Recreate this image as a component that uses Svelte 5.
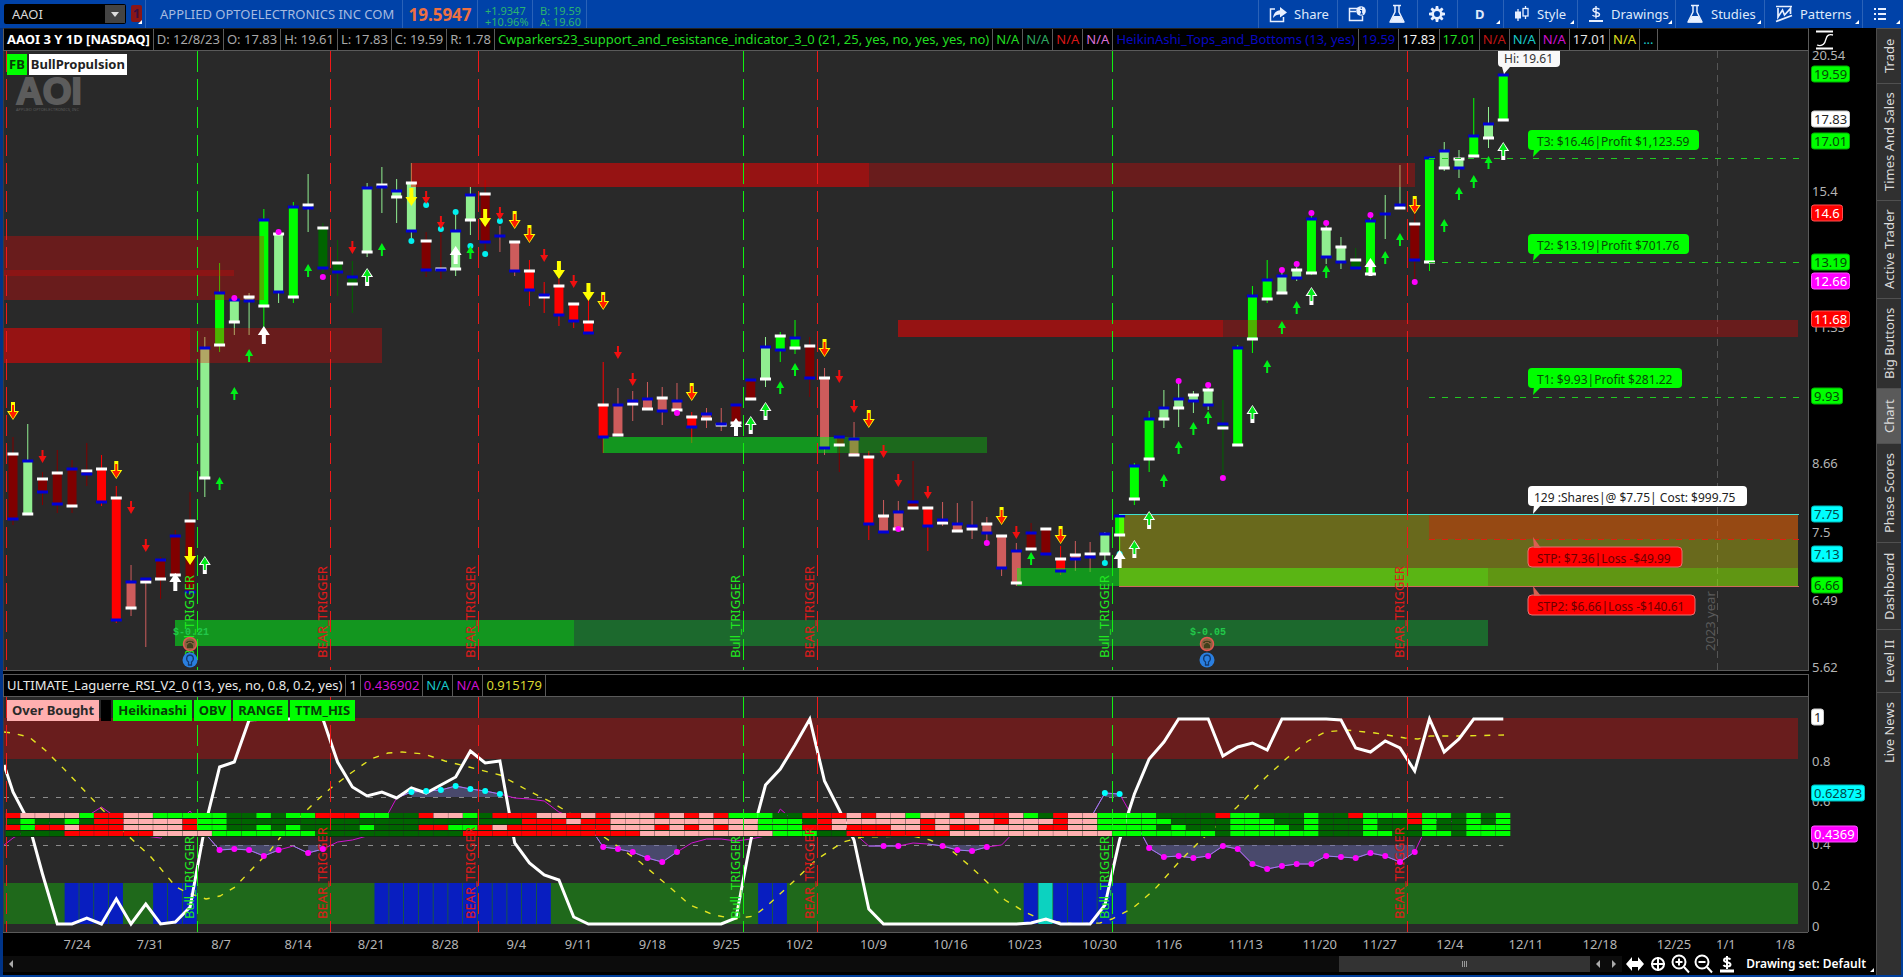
<script>
  // Design-space geometry of the two plots; drawings are rescaled to the live size.
  const X0 = 4, PLOT_W = 1804;
  const P1 = { y: 51, h: 619 };
  const P2 = { y: 697, h: 235 };
  const FIRST = 13, STEP = 14.755;

  let w = $state(PLOT_W), h1 = $state(P1.h), h2 = $state(P2.h);

  const sx = (v) => ((v - X0) * w) / PLOT_W;
  const cx = (i) => sx(FIRST + STEP * i);
  const y1 = (v) => ((v - P1.y) * h1) / P1.h;
  const y2 = (v) => ((v - P2.y) * h2) / P2.h;

  const COL = { G: '#00ff00', L: '#90ee90', D: '#006400', R: '#ff0000', P: '#cd5c5c', M: '#800000' };
  const CELL = { G: '#00ff00', D: '#006400', R: '#ff0000', P: '#ffafaf' };

  // colour, high, low, open tick (white), close tick (blue)
  const candles = [
    ['M',437,525,454,519],['L',424,514,514,461],['M',472,505,479,492],['M',450,513,473,504],['M',460,513,506,469],
    ['M',443,486,471,474],['R',455,506,469,502],['R',486,623,498,620],['P',565,616,608,582],['P',578,647,582,579],
    ['M',557,599,579,560],['M',530,577,575,536],['M',492,593,521,592],['L',337,497,478,348],['G',263,352,345,293],
    ['L',297,335,322,300],['L',293,335,297,301],['G',209,330,306,220],['L',231,303,234,292],['G',202,303,297,207],
    ['L',174,232,205,208],['D',223,273,228,268],['D',240,296,263,272],['D',261,313,284,277],['L',183,257,252,188],
    ['L',167,213,185,187],['L',179,223,197,191],['L',163,238,183,231],['M',232,277,241,270],['M',233,279,269,270],
    ['L',214,276,269,231],['L',187,235,220,195],['M',180,250,194,242],['P',226,252,236,236],['P',242,276,242,271],
    ['R',260,306,271,290],['R',282,313,297,295],['R',279,326,286,315],['R',304,328,304,321],['R',300,333,322,333],
    ['R',362,453,405,437],['P',388,435,435,405],['P',391,421,404,401],['P',382,409,409,399],['P',387,425,398,411],
    ['P',383,410,410,401],['R',412,443,417,427],['P',408,428,419,414],['P',408,431,425,424],['M',405,423,423,405],
    ['M',380,399,399,380],['L',337,387,379,347],['G',332,362,336,350],['G',320,354,348,338],['M',337,397,346,378],
    ['P',368,455,378,448],['M',436,472,445,437],['P',422,455,455,439],['R',451,540,457,524],['P',500,533,516,532],
    ['P',501,529,529,512],['M',461,508,508,502],['R',508,551,508,526],['P',502,526,523,520],['P',503,531,531,524],
    ['P',501,539,529,526],['P',517,542,524,533],['P',536,576,536,568],['P',543,586,583,551],['M',523,549,549,533],
    ['M',529,554,529,554],['R',546,575,559,571],['P',541,571,555,559],['P',542,572,554,557],['L',532,562,554,534],
    ['G',516,553,535,516],['G',463,505,499,466],['G',411,472,459,419],['L',390,428,419,408],['L',383,427,408,399],
    ['L',391,413,395,401],['L',387,410,390,405],['D',400,475,428,424],['G',345,445,445,348],['G',286,353,339,296],
    ['G',260,303,299,280],['L',272,293,293,276],['L',267,281,270,278],['G',215,275,273,219],['L',225,264,229,257],
    ['L',237,269,247,262],['D',248,268,260,268],['G',217,274,274,221],['L',195,239,214,214],['L',165,208,208,205],
    ['M',213,280,224,260],['G',158,271,262,158],['L',142,171,168,151],['L',150,178,159,168],['G',98,156,156,136],
    ['L',107,148,138,124],['G',74,120,120,75]
  ];

  const arrows = [
    ['yr',0,411],['r',2,456],['yr',7,470],['r',8,507],['r',9,545],['w',11,582],['y',12,556],['wg',13,565],['g',14,484],
    ['g',15,394],['g',16,356],['w',17,335],['g',20,271],['r',23,247],['wg',24,277],['g',25,250],['y',27,197],['r',28,197],
    ['r',29,222],['w',30,255],['g',31,253],['y',32,218],['r',33,213],['yr',34,220],['yr',35,234],['r',36,255],['y',37,270],
    ['r',38,281],['y',39,292],['yr',40,301],['r',41,352],['r',42,379],['yr',46,392],['w',49,427],['wg',50,425],['wg',51,411],
    ['g',52,388],['g',53,370],['yr',55,348],['r',56,376],['r',57,406],['yr',58,419],['r',59,451],['r',60,480],['r',62,492],
    ['yr',67,516],['r',68,532],['g',69,559],['yr',71,535],['w',75,559],['wg',76,549],['wg',77,520],['g',78,481],['g',79,448],
    ['g',80,429],['g',81,418],['wg',84,414],['g',85,367],['g',86,328],['g',87,308],['wg',88,296],['g',89,272],['w',92,267],
    ['g',93,258],['g',94,240],['yr',95,205],['g',97,226],['g',98,194],['g',99,182],['g',100,163],['wg',101,151]
  ];

  const magentaDots = [[15,298],[18,232],[21,277],[45,413],[60,529],[66,543],[79,381],[81,385],[82,478],[86,270],[87,264],[88,213],[89,223],[92,215],[95,282]];
  const cyanDots = [[27,241],[28,205],[29,229],[30,212],[31,246],[32,254],[33,221],[74,563],[75,554]];

  // x from, x to, y top, y bottom, fill, opacity
  const zones = [
    [4,264,236,300,'#f00',0.3],[4,234,270,276,'#f00',0.23],
    [4,382,328,363,'#f00',0.3],[4,190,328,363,'#f00',0.3],
    [411,1415,163,187,'#f00',0.3],[411,869,163,187,'#f00',0.3],
    [898,1798,320,337,'#f00',0.3],[898,1223,320,337,'#f00',0.3],
    [603,987,437,453,'#0f0',0.3],[603,837,437,453,'#00ff28',0.3],
    [175,1488,620,646,'#00ff38',0.3],[175,574,620,646,'#0f0',0.3],
    [1017,1798,568,586,'#0f0',0.3],[1017,1488,568,586,'#00ff20',0.3],
    [1119,1798,515,586,'#ff0',0.3],[1429,1798,515,539,'#f00',0.3]
  ];

  const triggers = [
    [6,'bear',''],[197,'bull','Bull_TRIGGER'],[330,'bear','BEAR_TRIGGER'],[478,'bear','BEAR_TRIGGER'],[743,'bull','Bull_TRIGGER'],
    [817,'bear','BEAR_TRIGGER'],[1112,'bull','Bull_TRIGGER'],[1407,'bear','BEAR_TRIGGER']
  ];

  const bubbles = [
    [130,171,27,'T3: $16.46|Profit $1,123.59','up'],
    [234,161,27,'T2: $13.19|Profit $701.76','up'],
    [368,154,27,'T1: $9.93|Profit $281.22','up'],
    [486,219,28,'129 :Shares|@ $7.75| Cost: $999.75','cost'],
    [547,154,-10,'STP: $7.36|Loss -$49.99','stop'],
    [595,167,-9,'STP2: $6.66|Loss -$140.61','stop']
  ];

  const axis1 = [
    ['20.54',55,''],['19.59',74,'g'],['17.83',119,'w'],['17.01',141,'g'],['15.4',191,''],['14.6',213,'r'],['13.19',262,'g'],
    ['12.66',281,'m'],['11.33',327,''],['11.68',319,'r'],['9.93',396,'g'],['8.66',463,''],['7.5',532,''],['7.75',514,'c'],
    ['7.13',554,'c'],['6.49',600,''],['6.66',585,'g'],['5.62',667,'']
  ];
  const axis2 = [
    ['1',717,'w'],['0.8',761,''],['0.6',801,''],['0.62873',793,'c'],['0.4',844,''],['0.4369',834,'m'],['0.2',885,''],['0',926,'']
  ];

  const dates = [
    ['7/24',78],['7/31',151],['8/7',222],['8/14',299],['8/21',372],['8/28',446],['9/4',517],['9/11',579],['9/18',653],['9/25',727],
    ['10/2',800],['10/9',874],['10/16',951],['10/23',1025],['10/30',1100],['11/6',1169],['11/13',1246],['11/20',1320],
    ['11/27',1380],['12/4',1450],['12/11',1526],['12/18',1600],['12/25',1674],['1/1',1726],['1/8',1785]
  ];

  const header1 = [
    ['D: 12/8/23','#a8a8a8'],['O: 17.83','#a8a8a8'],['H: 19.61','#a8a8a8'],['L: 17.83','#a8a8a8'],['C: 19.59','#a8a8a8'],['R: 1.78','#a8a8a8'],
    ['Cwparkers23_support_and_resistance_indicator_3_0 (21, 25, yes, no, yes, yes, no)','#22dd22'],
    ['N/A','#22dd22'],['N/A','#2fa860'],['N/A','#d81818'],['N/A','#da70d6'],['HeikinAshi_Tops_and_Bottoms (13, yes)','#0808c0'],['19.59','#0808c0'],
    ['17.83','#f4f4f4'],['17.01','#22dd22'],['N/A','#c01515'],['N/A','#19c8c8'],['N/A','#d010d0'],['17.01','#e4e4e4'],['N/A','#e0e020'],['...','#19c8c8']
  ];
  const header2 = [
    ['ULTIMATE_Laguerre_RSI_V2_0 (13, yes, no, 0.8, 0.2, yes)','#e8e8e8'],['1','#e8e8e8'],['0.436902','#d010d0'],['N/A','#19c8c8'],['N/A','#d010d0'],['0.915179','#d8d830']
  ];

  const rsi = [
    [-0.6,765],[0,792],[1,820],[2,874],[3,924],[4,924],[5,918],[6,924],[7,899],[8,924],[9,904],[10,924],[11,922],[12,907],[13,827],
    [14,767],[15,762],[16,720],[17,719],[21,719],[22,762],[23,787],[24,796],[25,792],[26,798],[27,788],[28,793],[29,785],[30,777],
    [31,751],[32,763],[33,761],[34,843],[35,863],[36,875],[37,880],[38,917],[39,924],[48,924],[49,918],[50,840],[51,785],[52,769],
    [53,745],[54,719],[55,781],[56,810],[57,840],[58,909],[59,924],[68,924],[69,923],[70,919],[71,924],[73,924],[74,905],[75,840],
    [76,794],[77,759],[78,742],[79,719],[81,719],[82,756],[83,747],[84,743],[85,750],[86,719],[89,719],[90,720],[91,748],[92,752],
    [93,741],[94,748],[95,771],[96,719],[97,752],[98,739],[99,719],[101,719]
  ];
  const entropy = [
    [-0.6,845],[0,838],[2,822],[4,826],[6,807],[8,828],[9,836],[10,838],[12,811],[13,833],[14,850],[15,849],[16,850],[17,856],[18,850],
    [19,846],[20,853],[21,849],[22,842],[23,840],[24,836],[25,825],[26,798],[27,792],[28,791],[29,790],[30,786],[31,789],[32,791],
    [33,794],[34,798],[35,799],[36,801],[37,812],[38,818],[39,825],[40,847],[41,849],[42,852],[43,858],[44,862],[45,852],[46,843],
    [47,839],[48,839],[49,841],[50,839],[51,836],[52,809],[53,822],[55,824],[56,818],[57,833],[58,846],[59,846],[60,846],[61,843],
    [62,844],[63,846],[64,850],[65,851],[66,847],[67,845],[68,830],[70,818],[72,824],[73,819],[74,793],[75,794],[76,820],[77,848],
    [78,857],[79,856],[80,858],[81,856],[82,846],[83,849],[84,864],[85,869],[86,866],[87,864],[88,864],[89,856],[90,857],[91,858],
    [92,853],[93,856],[94,862],[95,852],[96,820],[98,822],[101,822]
  ];
  const inRange = (i, list) => list.some(([a, b]) => i >= a && i <= b);
  const low = [[14,18],[20,21],[40,45],[59,60],[63,66],[77,95]];
  const high = [[27,33],[74,75]];
  const lowDots = entropy.filter(([i]) => inRange(i, low));
  const highDots = entropy.filter(([i]) => inRange(i, high));

  const average = [
    [4,732],[12,733],[29,737],[45,750],[65,770],[96,803],[122,830],[151,857],[176,887],[188,893],[206,899],[220,896],[235,887],[253,868],
    [269,852],[282,835],[314,803],[331,788],[351,773],[371,759],[388,753],[402,752],[424,754],[445,761],[469,767],[500,775],[527,790],
    [551,802],[571,814],[589,825],[604,837],[620,848],[640,862],[673,890],[690,905],[714,915],[735,919],[754,916],[768,905],[793,882],
    [816,860],[843,842],[862,837],[913,836],[930,840],[951,850],[971,867],[988,883],[1005,900],[1025,912],[1042,920],[1075,924],
    [1100,923],[1112,919],[1133,908],[1154,890],[1179,862],[1199,842],[1212,830],[1237,807],[1244,800],[1265,778],[1287,758],
    [1308,741],[1325,732],[1346,730],[1375,733],[1405,738],[1418,739],[1430,736],[1460,736],[1504,735]
  ];

  const heat = [
    'RPPPPGRRPPGGGGGDDGDGGRRRGGDDRPPGDRRRPPRPRPPPRPRPRGGGDDRRRPRPPGPPRPRRPGDRPPGGGGDDDDRGGDDDGDDRGGGRGGDGDG',
    'DGDDGDRRPPPPRGGDDDDDDDDDDDDDDDDDDDDRRRPRRPPPPPPPPPPGGGDRPPPPPPRPPPPRPPPRPPGGGGGDDDDGGGDDGDDDGDDRGDDGDG',
    'RGRRPRRRPPPPRGGDDGDGDDDDGDDDRRGGRPRRRRRRRPPPRPRPRPPGGGRRPRRRPPRPRRPPPPRRPPGGGGDGDDDGGGGDGDDDGDDDGDDGGG',
    'DDDDRRRRRRPPPPGGGGGGGDDDDDDDDDDRRRRRRRRRRRRPPPPPPPPPGGGDDRRRRRRRPPPPPPPPPPPGGGGGGGDGGGGGGDDDGGDDGGDGGG'
  ];
  const blueBars = [[4,7],[10,12],[25,36],[51,52],[69,75]].flatMap(([a, b]) => Array.from({ length: b - a + 1 }, (_, k) => a + k));

  const line = (pts, fx) => pts.map(([a, b]) => `${fx(a).toFixed(1)},${y2(b).toFixed(1)}`).join(' ');
  const fillBand = ([a, b], base) => {
    const pts = entropy.filter(([i]) => i >= a && i <= b);
    return `${cx(a)},${y2(base)} ${line(pts, cx)} ${cx(b)},${y2(base)}`;
  };

  const UP = 'M0-7L4 0H1V6H-1V0H-4Z';
  const DOWN = 'M0 7L4 0H1V-6H-1V0H-4Z';
  const UP_BIG = 'M0-9L6 0H2V9H-2V0H-6Z';
  const DOWN_BIG = 'M0 9L6 0H2V-9H-2V0H-6Z';

  const tabs = [
    ['Trade',55],['Times And Sales',117],['Active Trader',98],['Big Buttons',90],['Chart',55],['Phase Scores',99],['Dashboard',87],['Level II',63],['Live News',81]
  ];
</script>

{#snippet flask()}
  <svg class="ico" width="18" height="20" viewBox="0 0 18 20" aria-hidden="true">
    <path d="M5 1.500H13M7 2V8L2 18H16L11 8V2" fill="none" stroke="#e8f0ff" stroke-width="1.500" stroke-linejoin="round" />
    <path d="M5.500 12H12.500L16 18.500H2Z" fill="#e8f0ff" />
  </svg>
{/snippet}

{#snippet vlines(fy, top, bottom, labelY)}
  {#each triggers as [x, kind, label]}
    <line class={kind} x1={sx(x) + 0.5} x2={sx(x) + 0.5} y1={fy(top)} y2={fy(bottom)} stroke-dasharray="21 7" />
    {#if label}
      <text class="trig {kind}-t" transform="translate({sx(x) - 3} {fy(labelY)}) rotate(-90)">{label}</text>
    {/if}
  {/each}
{/snippet}

<div class="app">
  <header class="topbar">
    <div class="symbol">
      <input aria-label="Symbol" value="AAOI" />
      <button class="drop" aria-label="Symbol list"><i></i></button>
    </div>
    <button class="link" aria-label="Link group 1"><b>1</b><i class="corner"></i></button>
    <span class="company">APPLIED OPTOELECTRONICS INC COM</span>
    <strong class="last">19.5947</strong>
    <span class="pair change"><span>+1.9347</span><span>+10.96%</span></span>
    <span class="pair quote"><span>B: 19.59</span><span>A: 19.60</span></span>
    <nav class="tools">
      <button class="t-share">
        <svg class="ico" width="18" height="18" viewBox="0 0 18 18" aria-hidden="true">
          <path d="M6 4H1.500V16.500H14.500V12" fill="none" stroke="#e8f0ff" stroke-width="1.500" />
          <path d="M11 2L18 7.500L11 12.500V9.500C8 9.500 6 10.500 4 13C4.500 8.500 7 5.500 11 5.200Z" fill="#e8f0ff" />
        </svg>Share</button>
      <button class="t-icon" aria-label="Info">
        <svg class="ico" width="18" height="18" viewBox="0 0 18 18" aria-hidden="true">
          <path d="M10 3.500H1.500V15.500H14.500V11M1.500 6.500H8" fill="none" stroke="#e8f0ff" stroke-width="1.500" />
          <circle cx="13" cy="6" r="4.800" fill="#e8f0ff" />
          <path d="M12 5.500H13.500V9M12 9H15M12.700 3.200H14" fill="none" stroke="#0042a8" stroke-width="1.200" />
        </svg></button>
      <button class="t-icon" aria-label="Edit studies">{@render flask()}</button>
      <button class="t-icon" aria-label="Settings">
        <svg class="ico" width="18" height="18" viewBox="-9 -9 18 18" aria-hidden="true">
          <circle r="4.200" fill="none" stroke="#e8f0ff" stroke-width="2.400" />
          {#each [0, 45, 90, 135, 180, 225, 270, 315] as a}
            <path d="M-1.200-8H1.200L1.700-4.800H-1.700Z" fill="#e8f0ff" transform="rotate({a})" />
          {/each}
        </svg></button>
      <button class="t-d"><b>D</b><i class="corner"></i></button>
      <button class="t-style">
        <svg class="ico" width="16" height="18" viewBox="0 0 16 18" aria-hidden="true">
          <path d="M4 4V16M11.500 1V14" stroke="#e8f0ff" stroke-width="1.300" />
          <rect x="1" y="6.500" width="6" height="7" fill="#e8f0ff" />
          <rect x="9" y="3.500" width="5" height="7.500" fill="#0042a8" stroke="#e8f0ff" stroke-width="1.300" />
        </svg>Style<i class="corner"></i></button>
      <button class="t-draw">
        <svg class="ico" width="16" height="18" viewBox="0 0 16 18" aria-hidden="true">
          <path d="M11.500 4.500C10.500 3 5 2.500 5 5.200C5 7.800 11.500 6.600 11.500 9.400C11.500 12 5.500 11.800 4.500 10M8 1V13.500" fill="none" stroke="#e8f0ff" stroke-width="1.400" />
          <rect x="1" y="15" width="14" height="2" fill="#e8f0ff" />
        </svg>Drawings<i class="corner"></i></button>
      <button class="t-stud">{@render flask()}Studies<i class="corner"></i></button>
      <button class="t-pat">
        <svg class="ico" width="18" height="18" viewBox="0 0 18 18" aria-hidden="true">
          <path d="M1 1.500H17M1 16.500L17 10.500M3 3V12L7.500 5L9.500 10L15.500 3.500V9" fill="none" stroke="#e8f0ff" stroke-width="1.700" />
        </svg>Patterns<i class="corner"></i></button>
      <button class="t-list" aria-label="Menu">
        <svg class="ico" width="14" height="14" viewBox="0 0 14 14" aria-hidden="true">
          <path d="M1 2H3M5 2H13M1 7H3M5 7H13M1 12H3M5 12H13" stroke="#e8f0ff" stroke-width="1.800" />
        </svg><i class="corner"></i></button>
    </nav>
  </header>

  <div class="body">
    <main class="charts">
      <div class="strip">
        <span class="title">AAOI 3 Y 1D [NASDAQ]</span>
        {#each header1 as [t, c]}<span style:color={c}>{t}</span>{/each}
      </div>
      <div class="axis-top">
        <svg width="18" height="20" viewBox="0 0 18 20" aria-hidden="true">
          <path d="M0 1.500H17M0 18.500H17" stroke="#fff" stroke-width="2" />
          <path d="M1 15C7 17 9 13 10 9C11 5 13 4 17 5" fill="none" stroke="#fff" stroke-width="1.300" />
        </svg>
      </div>

      <div class="plot" bind:clientWidth={w} bind:clientHeight={h1}>
        <svg class="canvas" width="100%" height="100%" role="img" aria-label="Price chart">
          <g fill="#5c5c5c">
            <text x="12" y="53" class="logo">AOI</text>
            <text x="12" y="60" class="logo-sub">APPLIED OPTOELECTRONICS, INC</text>
          </g>
          <line x1={sx(1717) + 0.5} x2={sx(1717) + 0.5} y1="0" y2={h1} stroke="#555" stroke-dasharray="7 5" />
          <text class="year" transform="translate({sx(1715)} {y1(651)}) rotate(-90)">2023 year</text>

          {#each candles as [c, hi, lo, a, b], i}
            <rect x={cx(i) - 0.5} y={y1(hi)} width="1" height={y1(lo) - y1(hi)} fill={COL[c]} />
            <rect x={cx(i) - 4.5} y={y1(Math.min(a, b))} width="9" height={Math.abs(y1(a) - y1(b))} fill={COL[c]} />
          {/each}
          {#each zones as [xa, xb, ya, yb, f, o]}
            <rect x={sx(xa)} y={y1(ya)} width={sx(xb) - sx(xa)} height={y1(yb) - y1(ya)} fill={f} fill-opacity={o} />
          {/each}
          {#each candles as [c, hi, lo, a, b], i}
            {#if a !== b}<rect x={cx(i) - 5.5} y={y1(a) - 1.5} width="11" height="3" fill="#fff" />{/if}
            <rect x={cx(i) - 5.5} y={y1(b) - 1.5} width="11" height="3" fill="#0000d8" />
          {/each}

          <line x1={sx(1119)} x2={sx(1799)} y1={y1(514.5)} y2={y1(514.5)} stroke="#40e0d0" />
          <line x1={sx(1119)} x2={sx(1799)} y1={y1(586.5)} y2={y1(586.5)} stroke="#cd6c5c" />
          {#each [[158.5, '#22c822'], [262.5, '#22c822'], [397.5, '#22c822'], [539.5, '#e02010']] as [y, c]}
            <line x1={sx(1429)} x2={sx(1799)} y1={y1(y)} y2={y1(y)} stroke={c} stroke-dasharray="6 7" />
          {/each}

          {@render vlines(y1, 51, 670, 658)}

          {#each magentaDots as [i, y]}<circle cx={cx(i)} cy={y1(y)} r="3" fill="#ff00ff" />{/each}
          {#each cyanDots as [i, y]}<circle cx={cx(i)} cy={y1(y)} r="3" fill="#00f0f0" />{/each}
          {#each arrows as [k, i, y]}
            <g transform="translate({cx(i)} {y1(y)})">
              {#if k === 'g'}<path d={UP} fill="#00f018" />
              {:else if k === 'r'}<path d={DOWN} fill="#f01010" />
              {:else if k === 'w' || k === 'wg'}
                <path d={UP_BIG} fill="#fff" />
                {#if k === 'wg'}<path d="M0-8L4-1H1V5H-1V-1H-4Z" fill="#00e818" />{/if}
              {:else}
                <path d={DOWN_BIG} fill="#ffff00" />
                {#if k === 'yr'}<path d="M0 8L4 1H1V-6H-1V1H-4Z" fill="#ff1a00" />{/if}
              {/if}
            </g>
          {/each}

          {#each [[190, '$-0.21'], [1207, '$-0.05']] as [x, label]}
            <g transform="translate({sx(x)} 0)">
              <text class="eps" x="1" y={y1(635)}>{label}</text>
              <g transform="translate(0 {y1(644)})">
                <circle r="6.500" fill="#8a6040" stroke="#e05a50" stroke-width="1.500" />
                <path d="M-4-1C-4-4 4-4 4-1L2-1V-2H-2V-1ZM-3 4V1L-1-1H1L3 1V4Z" fill="#40401c" />
              </g>
              <g transform="translate(0 {y1(660)})">
                <circle r="7.500" fill="#2a7fe0" />
                <path d="M-1.500 2C-5-1-3-5 0-5S5-1 1.500 2V5H-1.500Z" fill="none" stroke="#123a70" stroke-width="1.300" />
              </g>
            </g>
          {/each}

          {#each bubbles as [top, bw, tip, label, kind]}
            <g transform="translate({sx(1528)} {y1(top)})" class="bubble {kind}">
              <rect width={bw} height="20" rx="4" />
              <path d={tip > 0 ? `M6 19L5 ${tip}L13 19Z` : `M6 1L5 ${tip}L13 1Z`} />
              <text x={kind === 'cost' ? 6 : 9} y="16">{label}</text>
            </g>
          {/each}
          <g transform="translate({sx(1498)} 0)" class="bubble hi">
            <rect y="-6" width="62" height="22" rx="4" />
            <path d="M4 16L6 23L12 16Z" />
            <text x="6" y="12">Hi: 19.61</text>
          </g>
        </svg>
        <div class="tags">
          <span class="green tight">FB</span><span class="white tight">BullPropulsion</span>
        </div>
      </div>
      <div class="scale">
        {#each axis1 as [t, y, k]}
          <span class="mark {k}" style:top="{((y - P1.y) / P1.h) * 100}%">{t}</span>
        {/each}
      </div>

      <div class="split"></div>

      <div class="strip second">
        {#each header2 as [t, c]}<span style:color={c}>{t}</span>{/each}
      </div>
      <div class="axis-mid"></div>

      <div class="plot" bind:clientHeight={h2}>
        <svg class="canvas" width="100%" height="100%" role="img" aria-label="Laguerre RSI study">
          <rect x="0" y={y2(718)} width={sx(1798)} height={y2(759) - y2(718)} fill="#691d1d" />
          <rect x="0" y={y2(883)} width={sx(1798)} height={y2(924) - y2(883)} fill="#1f691b" />
          {#each blueBars as i}
            <rect x={cx(i) - 7.4} y={y2(883)} width={(STEP * w) / PLOT_W - 0.7} height={y2(924) - y2(883)} fill={i === 70 ? '#0cd2c0' : '#081ec0'} />
          {/each}
          {#each [797.5, 845.5] as y}
            <line x1="0" x2={cx(101)} y1={y2(y)} y2={y2(y)} stroke="#8c8c8c" stroke-dasharray="5 8" />
          {/each}
          {#each low as r}<polygon points={fillBand(r, 845)} fill="#6a6ab0" fill-opacity="0.5" />{/each}
          {#each high as r}<polygon points={fillBand(r, 797)} fill="#6a6ab0" fill-opacity="0.5" />{/each}
          <polyline points={line(entropy, cx)} fill="none" stroke="#d010d0" />
          {#each [...low, ...high] as [a, b]}
            <polyline points={line(entropy.filter(([i]) => i >= a - 1 && i <= b), cx)} fill="none" stroke="#8c8ce6" />
          {/each}
          <polyline points={line(average, sx)} fill="none" stroke="#e4e420" stroke-width="1.400" stroke-dasharray="6 8" />
          <polyline points={line(rsi, cx)} fill="none" stroke="#fff" stroke-width="3" />
          {#each heat as row, r}
            {#each row as c, i}
              <rect x={cx(i) - 7.4} y={y2(813) + r * 6} width={(STEP * w) / PLOT_W - 0.3} height="5" fill={CELL[c]} />
            {/each}
            <line x1={cx(0) - 7} x2={cx(101) + 7} y1={y2(813) + r * 6 + 5.5} y2={y2(813) + r * 6 + 5.5} stroke="#102c10" />
          {/each}
          {@render vlines(y2, 697, 932, 919)}
          {#each lowDots as [i, y]}<circle cx={cx(i)} cy={y2(y)} r="3" fill="#ff00ff" />{/each}
          {#each highDots as [i, y]}<circle cx={cx(i)} cy={y2(y)} r="3" fill="#00ffff" />{/each}
        </svg>
        <div class="tags wide">
          <span class="pink">Over Bought</span><span class="black"></span><span class="green">Heikinashi</span><span class="green">OBV</span><span class="green">RANGE</span><span class="green">TTM_HIS</span>
        </div>
      </div>
      <div class="scale">
        {#each axis2 as [t, y, k]}
          <span class="mark {k}" style:top="{((y - P2.y) / P2.h) * 100}%">{t}</span>
        {/each}
      </div>

      <div class="dates">
        {#each dates as [t, x]}<span style:left="{((x - X0) / PLOT_W) * 100}%">{t}</span>{/each}
      </div>

      <footer class="bottom">
        <div class="scroll">
          <button class="arrow left" aria-label="Scroll left"><i></i></button>
          <div class="track"><div class="thumb"><i></i><i></i><i></i></div></div>
          <button class="arrow left" aria-label="Step left"><i></i></button>
          <button class="arrow right" aria-label="Step right"><i></i></button>
        </div>
        <button aria-label="Pan">
          <svg width="18" height="14" viewBox="0 0 18 14"><path d="M0 7L6 0V4H12V0L18 7L12 14V10H6V14Z" fill="#fff" /></svg></button>
        <button aria-label="Crosshair">
          <svg width="18" height="18" viewBox="0 0 18 18"><circle cx="9" cy="9" r="6" fill="none" stroke="#fff" stroke-width="2" /><path d="M9 2V16M2 9H16" stroke="#fff" stroke-width="2" /></svg></button>
        <button aria-label="Zoom in">
          <svg width="20" height="20" viewBox="0 0 20 20"><circle cx="8" cy="8" r="6.500" fill="none" stroke="#fff" stroke-width="2" /><path d="M8 4.500V11.500M4.500 8H11.500M13 13L18 18.500" stroke="#fff" stroke-width="2" /></svg></button>
        <button aria-label="Zoom out">
          <svg width="20" height="20" viewBox="0 0 20 20"><circle cx="8" cy="8" r="6.500" fill="none" stroke="#fff" stroke-width="2" /><path d="M4.500 8H11.500M13 13L18 18.500" stroke="#fff" stroke-width="2" /></svg></button>
        <button aria-label="Price tools">
          <svg width="16" height="18" viewBox="0 0 16 18"><path d="M11.500 4.500C10.500 3 5 2.500 5 5.200C5 7.800 11.500 6.600 11.500 9.400C11.500 12 5.500 11.800 4.500 10M8 1V14" fill="none" stroke="#fff" stroke-width="2" /><rect x="1" y="14.500" width="14" height="3" fill="#fff" /></svg></button>
        <button class="set">Drawing set: Default<i class="corner"></i></button>
      </footer>
    </main>

    <aside class="side">
      {#each tabs as [t, size]}
        <button class:active={t === 'Chart'} style:flex-basis="{size}px">{t}</button>
      {/each}
    </aside>
  </div>
</div>

<style>
  :global(body) { margin: 0; background: #000; }
  * { box-sizing: border-box; }
  .app {
    min-height: 100vh; display: flex; flex-direction: column; background: #000;
    font-family: "Noto Sans", "Open Sans", sans-serif; font-size: 13px; line-height: 18px;
    border-bottom: 2px solid #003f9c; overflow: hidden;
  }
  button { font: inherit; color: inherit; background: none; border: 0; padding: 0; margin: 0; }
  .ico { display: block; flex: none; }

  .topbar { height: 28px; flex: none; display: flex; align-items: stretch; background: #0042a8; color: #dfe9fa; white-space: nowrap; }
  .symbol { display: flex; width: 122px; margin: 4px 0 4px 4px; background: #000; border-radius: 2px; }
  .symbol input { flex: 1; min-width: 0; border: 0; background: none; color: #d8d8d8; font: inherit; padding: 0 0 0 8px; outline: 0; }
  .drop { width: 20px; background: #444; display: flex; align-items: center; justify-content: center; margin: 1px; }
  .drop i { border: 4px solid transparent; border-top: 5px solid #ddd; border-bottom: 0; }
  .link { position: relative; width: 20px; padding: 5px 5px 6px 5px; margin-left: 0; border-right: 1px solid #2a62b8; }
  .link b { display: block; width: 11px; height: 17px; line-height: 17px; background: #8a1616; color: #3b1040; border-radius: 2px; text-align: center; }
  .corner { position: absolute; right: 3px; bottom: 4px; border: 2px solid transparent; border-right-color: #fff; border-bottom-color: #fff; }
  .company { flex: none; padding: 0 0 0 14px; border-right: 1px solid #2a62b8; line-height: 28px; color: #a6bbe0; width: 257px; }
  .last { width: 75px; text-align: center; line-height: 30px; font-size: 17px; color: #ee7042; border-right: 1px solid #2a62b8; }
  .pair { display: flex; flex-direction: column; justify-content: center; font-size: 11px; line-height: 11px; color: #2bb470; border-right: 1px solid #2a62b8; padding: 3px 0 0 7px; }
  .change { width: 55px; }
  .quote { width: 54px; }
  .tools { margin-left: auto; display: flex; }
  .tools button { position: relative; display: flex; align-items: center; gap: 7px; border-left: 1px solid #2a62b8; padding-left: 10px; }
  .t-share { width: 79px; }
  .tools .t-icon { width: 40px; }
  .t-d { width: 46px; }
  .tools .t-d { padding-left: 17px; }
  .t-style { width: 74px; }
  .t-draw { width: 98px; }
  .t-stud { width: 89px; }
  .t-pat { width: 98px; }
  .t-list { width: 41px; }

  .body { flex: 1; display: flex; min-height: 0; border-left: 3px solid #003488; border-right: 2px solid #003f9c; }
  .charts {
    flex: 1; min-width: 0; display: grid;
    grid-template-columns: minmax(0, 1fr) 67px;
    grid-template-rows: 23px 619fr 5px 22px 235fr 24px 19px;
  }
  .strip { display: flex; overflow: hidden; border: 1px solid #5a5a5a; border-top-color: #222; white-space: nowrap; background: #000; }
  .strip span { padding: 0 3px; border-right: 1px solid #5a5a5a; line-height: 21px; flex: none; }
  .strip .title { color: #fff; font-weight: 700; }
  .strip.second { border-top: 0; }
  .axis-top { padding: 2px 0 0 7px; background: #000; }
  .plot { position: relative; contain: size; overflow: hidden; background: #292929; border-right: 1px solid #5a5a5a; border-left: 1px solid #3c3c3c; }
  .canvas { display: block; }
  .scale { position: relative; }
  .mark { position: absolute; left: 2px; transform: translateY(-50%); color: #b4b4b4; line-height: 16px; padding: 0 1px; }
  .mark.g, .mark.w, .mark.r, .mark.m, .mark.c { padding: 0 2px; border-radius: 3px; border: 1px solid; line-height: 15px; }
  .mark.g { background: #00ff00; border-color: #00b000; color: #064a06; }
  .mark.w { background: #fff; border-color: #ccc; color: #222; }
  .mark.r { background: #ff0000; border-color: #ff5050; color: #fff; }
  .mark.m { background: #ff00ff; border-color: #ff50ff; color: #fff; }
  .mark.c { background: #00ffff; border-color: #00b8b8; color: #004848; }
  .split { grid-column: 1; border-top: 1px solid #5a5a5a; border-bottom: 1px solid #5a5a5a; }
  .split + .strip { grid-column: 1; }

  .tags { position: absolute; top: 3px; left: 3px; display: flex; gap: 2px; font-weight: 700; line-height: 21px; white-space: nowrap; }
  .tags span { padding: 0 5px; color: #083c08; }
  .tags .tight { padding: 0 2px; }
  .tags .green { background: #00ff00; }
  .tags .white { background: #fff; color: #222; }
  .tags .pink { background: #ffafaf; color: #2a2a2a; }
  .tags .black { background: #000; }

  .dates { grid-column: 1 / -1; position: relative; margin-right: 68px; border-top: 1px solid #5a5a5a; color: #b4b4b4; }
  .dates span { position: absolute; top: 2px; transform: translateX(-50%); }

  .bottom { grid-column: 1 / -1; display: flex; align-items: center; gap: 3px; color: #fff; padding: 0 2px 3px 0; }
  .bottom button { flex: none; display: flex; align-items: center; justify-content: center; min-width: 20px; height: 16px; }
  .bottom .set { position: relative; margin-left: 6px; padding-right: 8px; font-size: 12px; font-weight: 600; }
  .set .corner { right: 0; bottom: 0; }
  .scroll { flex: 1; display: flex; height: 16px; background: #0c0c0c; }
  .scroll .arrow { min-width: 16px; }
  .arrow i { border: 4px solid transparent; }
  .arrow.left i { border-right-color: #aaa; border-left: 0; }
  .arrow.right i { border-left-color: #aaa; border-right: 0; }
  .track { flex: 1; display: flex; justify-content: flex-end; }
  .thumb { width: 16%; background: #333; display: flex; gap: 1px; align-items: center; justify-content: center; }
  .thumb i { width: 1px; height: 6px; background: #999; }

  .side { flex: none; width: 25px; background: #303030; border-left: 1px solid #4c4c4c; display: flex; flex-direction: column; }
  .side button { flex: 0 0 auto; writing-mode: vertical-rl; transform: rotate(180deg); text-align: center; color: #dadada; border-bottom: 1px solid #505050; width: 24px; white-space: nowrap; overflow: hidden; line-height: 24px; }
  .side .active { background: #5a5a5a; }

  text { font-family: "Noto Sans", "Open Sans", sans-serif; font-size: 13px; }
  .bear { stroke: #f01818; }
  .bull { stroke: #10f010; }
  .bear-t { fill: #e01a1a; }
  .bull-t { fill: #20e820; }
  .year { fill: #5a5a5a; }
  .eps { font-family: "Liberation Mono", monospace; font-size: 10px; font-weight: 700; fill: #22c84a; text-anchor: middle; }
  .logo { font-size: 37px; font-weight: 700; font-family: "Liberation Sans Narrow", "Liberation Sans", sans-serif; stroke: #5c5c5c; stroke-width: 2; }
  .logo-sub { font-size: 4px; }
  .bubble text { font-size: 12px; }
  .up rect, .up path { fill: #00ff00; }
  .up text { fill: #084a08; }
  .cost rect, .cost path { fill: #fff; }
  .cost text { fill: #222; }
  .stop rect { fill: #ff0000; stroke: #e87070; }
  .stop path { fill: #d86050; }
  .stop text { fill: #6a0000; }
  .hi rect, .hi path { fill: #f8f8f8; }
  .hi text { fill: #333; }
</style>
